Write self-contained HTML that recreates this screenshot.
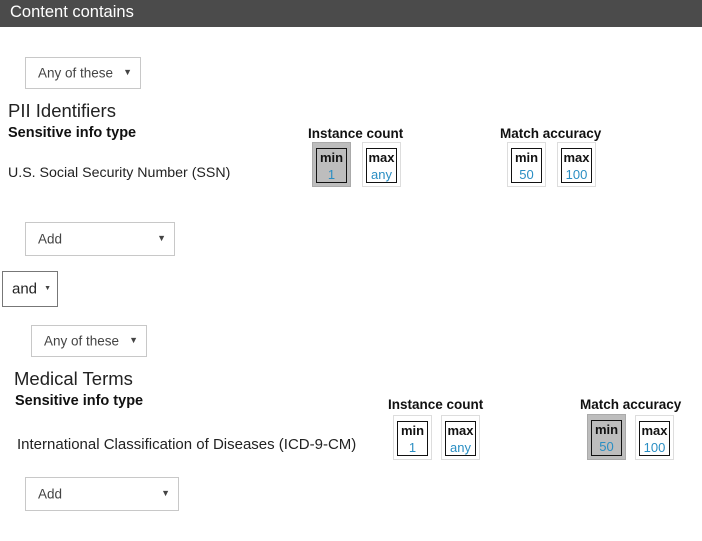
<!DOCTYPE html>
<html><head><style>
body{margin:0;width:702px;height:541px;background:#fff;font-family:"Liberation Sans",sans-serif;position:relative;overflow:hidden;color:#222}
.a{position:absolute;white-space:nowrap}
.hdr{left:0;top:0;width:702px;height:27px;background:#4b4b4b;color:#fff;font-size:16.5px;line-height:24px;padding-left:10px;box-sizing:border-box}
.dd{position:absolute;border:1px solid #c8c8c8;font-size:13.5px;color:#444;box-sizing:border-box;background:#fff}
.dd span{position:absolute;left:12px;top:50%;transform:translateY(-50%)}
.dd i{position:absolute;right:8px;top:50%;font-style:normal;font-size:9px;transform:translateY(-60%)}
.h{font-size:18.5px;color:#222}
.b{font-size:14.5px;font-weight:bold;color:#111}
.bb{font-size:13.5px;font-weight:bold;color:#111}
.t{font-size:14.2px;color:#222}
.box{position:absolute;width:39px;height:45px;border:1px solid #ddd;box-sizing:border-box;background:#fff}
.box.sel{background:#bdbdbd;border-color:#aaa}
.box div{position:absolute;left:3px;top:5px;right:3px;bottom:3px;border:1.5px solid #111;text-align:center;font-size:13px;line-height:17px}
.box b{display:block;color:#111}
.box em{display:block;font-style:normal;color:#2a8ec3;font-size:13px}
</style></head><body>
<div class="a hdr">Content contains</div>
<div class="dd" style="left:25px;top:57px;width:116px;height:32px"><span>Any of these</span><i>▼</i></div>
<div class="a h" style="left:8px;top:100px">PII Identifiers</div>
<div class="a b" style="left:8px;top:125px">Sensitive info type</div>
<div class="a t" style="left:8px;top:165px">U.S. Social Security Number (SSN)</div>
<div class="a bb" style="left:308px;top:126px">Instance count</div>
<div class="a bb" style="left:500px;top:126px">Match accuracy</div>
<div class="box sel" style="left:312px;top:142px"><div><b>min</b><em>1</em></div></div>
<div class="box" style="left:362px;top:142px"><div><b>max</b><em>any</em></div></div>
<div class="box" style="left:507px;top:142px"><div><b>min</b><em>50</em></div></div>
<div class="box" style="left:557px;top:142px"><div><b>max</b><em>100</em></div></div>
<div class="dd" style="left:25px;top:222px;width:150px;height:34px"><span>Add</span><i>▼</i></div>
<div class="dd" style="left:2px;top:271px;width:56px;height:36px;border-color:#777;font-size:15px"><span style="left:9px;color:#222">and</span><i style="right:6px;font-size:7px">▼</i></div>
<div class="dd" style="left:31px;top:325px;width:116px;height:32px"><span>Any of these</span><i>▼</i></div>
<div class="a h" style="left:14px;top:368px">Medical Terms</div>
<div class="a b" style="left:15px;top:393px">Sensitive info type</div>
<div class="a t" style="left:17px;top:436px;font-size:15px">International Classification of Diseases (ICD-9-CM)</div>
<div class="a bb" style="left:388px;top:397px">Instance count</div>
<div class="a bb" style="left:580px;top:397px">Match accuracy</div>
<div class="box" style="left:393px;top:415px"><div><b>min</b><em>1</em></div></div>
<div class="box" style="left:441px;top:415px"><div><b>max</b><em>any</em></div></div>
<div class="box sel" style="left:587px;top:414px;height:46px"><div><b>min</b><em>50</em></div></div>
<div class="box" style="left:635px;top:415px"><div><b>max</b><em>100</em></div></div>
<div class="dd" style="left:25px;top:477px;width:154px;height:34px"><span>Add</span><i>▼</i></div>
</body></html>
